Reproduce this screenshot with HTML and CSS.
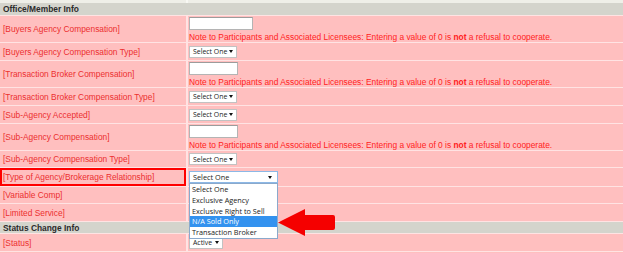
FILE: index.html
```html
<!DOCTYPE html>
<html lang="en">
<head>
  <meta charset="UTF-8" />
  <meta name="viewport" content="width=device-width, initial-scale=1.0"/>
  <title>Listing - Compensation</title>
  <link rel="stylesheet" href="styles.css">
</head>
<body>
  <div class="form-wrap">
    <table class="form">
      <tr class="strip">
        <td class="label"></td>
        <td></td>
      </tr>
      <tr class="section">
        <td colspan="2">Office/Member Info</td>
      </tr>

      <tr class="note-row">
        <td class="label">[Buyers Agency Compensation]</td>
        <td class="field">
          <div class="text-box wide"></div>
          <div class="note">Note to Participants and Associated Licensees: Entering a value of 0 is <b>not</b> a refusal to cooperate.</div>
        </td>
      </tr>
      <tr class="short">
        <td class="label">[Buyers Agency Compensation Type]</td>
        <td class="field"><div class="select"><span>Select One</span><i class="caret"></i></div></td>
      </tr>
      <tr class="note-row">
        <td class="label">[Transaction Broker Compensation]</td>
        <td class="field">
          <div class="text-box"></div>
          <div class="note">Note to Participants and Associated Licensees: Entering a value of 0 is <b>not</b> a refusal to cooperate.</div>
        </td>
      </tr>
      <tr class="short">
        <td class="label">[Transaction Broker Compensation Type]</td>
        <td class="field"><div class="select"><span>Select One</span><i class="caret"></i></div></td>
      </tr>
      <tr class="short">
        <td class="label">[Sub-Agency Accepted]</td>
        <td class="field"><div class="select"><span>Select One</span><i class="caret"></i></div></td>
      </tr>
      <tr class="note-row">
        <td class="label">[Sub-Agency Compensation]</td>
        <td class="field">
          <div class="text-box"></div>
          <div class="note">Note to Participants and Associated Licensees: Entering a value of 0 is <b>not</b> a refusal to cooperate.</div>
        </td>
      </tr>
      <tr class="short-sm">
        <td class="label">[Sub-Agency Compensation Type]</td>
        <td class="field"><div class="select"><span>Select One</span><i class="caret"></i></div></td>
      </tr>
      <tr class="marked">
        <td class="label">[Type of Agency/Brokerage Relationship]</td>
        <td class="field">
          <div class="dropdown">
            <div class="select open"><span>Select One</span><i class="caret"></i></div>
            <ul class="options">
              <li>Select One</li>
              <li>Exclusive Agency</li>
              <li>Exclusive Right to Sell</li>
              <li class="active">N/A Sold Only</li>
              <li>Transaction Broker</li>
            </ul>
            <svg class="pointer" width="60" height="31" viewBox="0 0 60 31">
              <path d="M1 15.5 L28 2 L28 8 L56 8 Q58 8 58 10 L58 21 Q58 23 56 23 L28 23 L28 29 Z" fill="#f50000"/>
            </svg>
          </div>
        </td>
      </tr>
      <tr class="short-sm">
        <td class="label">[Variable Comp]</td>
        <td class="field"></td>
      </tr>
      <tr class="short">
        <td class="label">[Limited Service]</td>
        <td class="field"></td>
      </tr>

      <tr class="section sm">
        <td colspan="2">Status Change Info</td>
      </tr>
      <tr class="short">
        <td class="label">[Status]</td>
        <td class="field"><div class="select tiny"><span>Active</span><i class="caret"></i></div></td>
      </tr>
    </table>
  </div>
</body>
</html>
```

FILE: styles.css
```css
body {
  margin: 0;
  background: #ffbfbf;
  font-family: 'Liberation Sans', Arial, sans-serif;
  font-size: 8.4px;
  overflow: hidden;
}

.form {
  width: 100%;
  border-collapse: collapse;
}

.form td {
  padding: 0;
  vertical-align: middle;
  background: #ffbfbf;
  border-bottom: 1px solid #ffe3e3;
}

.form td.label {
  width: 183px;
  padding-left: 3px;
  color: #ec2f2f;
  border-right: 2px solid #ffe3e3;
  white-space: nowrap;
}

.form td.field {
  padding-left: 1px;
}

.strip td {
  height: 3px;
  background: #efefe8;
  border-bottom: none;
}

.strip td.label {
  border-right-color: #f9f9f4;
}

.section td {
  height: 12px;
  background: #d4d4cc;
  color: #2b2b2b;
  font-weight: bold;
  padding-left: 3px;
}

.section.sm td {
  height: 11px;
}

.note-row td { height: 26px; }
.short td { height: 17px; }
.short-sm td { height: 16px; }
.marked td { height: 18px; }

.marked td.label {
  box-shadow: inset 0 0 0 2px #ff0000;
}

.text-box {
  box-sizing: border-box;
  width: 49px;
  height: 13px;
  background: #fff;
  border: 1px solid #b4b4b4;
  border-top-color: #9c9c9c;
}

.text-box.wide {
  width: 64px;
}

.note {
  margin-top: 2px;
  color: #ff2222;
  line-height: 10px;
  white-space: nowrap;
}

.select {
  box-sizing: border-box;
  display: flex;
  align-items: center;
  justify-content: space-between;
  width: 48px;
  height: 12px;
  padding: 0 3px 0 3px;
  background: #fff;
  border: 1px solid #c2c2c2;
  font-family: 'Open Sans', 'Noto Sans', sans-serif;
  font-size: 6.9px;
  color: #1a1a1a;
  white-space: nowrap;
}

.select.tiny {
  width: 34px;
}

.select.open {
  width: 89px;
  padding-right: 5px;
  border-color: #8cb8e6;
  font-size: 7.3px;
}

.caret {
  flex-shrink: 0;
  width: 0;
  height: 0;
  border-left: 2px solid transparent;
  border-right: 2px solid transparent;
  border-top: 3px solid #111;
}

.dropdown {
  position: relative;
}

.options {
  position: absolute;
  top: 12px;
  left: 0;
  z-index: 2;
  box-sizing: border-box;
  width: 89px;
  margin: 0;
  padding: 0;
  list-style: none;
  background: #fff;
  border: 1px solid #8aa9cc;
  font-family: 'Open Sans', 'Noto Sans', sans-serif;
  font-size: 7.3px;
  color: #1a1a1a;
}

.options li {
  height: 10.8px;
  line-height: 10.8px;
  padding-left: 2px;
}

.options li.active {
  background: #3392ef;
  color: #fff;
}

.pointer {
  position: absolute;
  left: 88px;
  top: 36px;
  z-index: 3;
}
```
